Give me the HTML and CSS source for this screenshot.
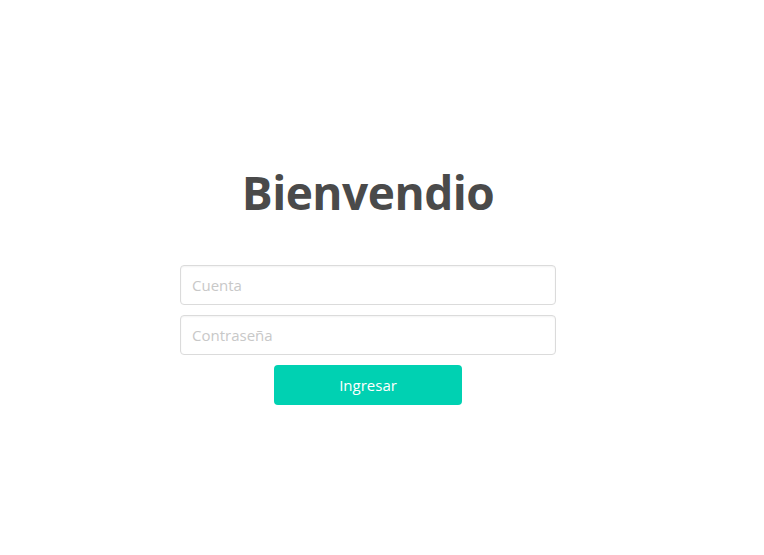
FILE: index.html
```html
<!DOCTYPE html>
<html lang="es">
<head>
<meta charset="utf-8">
<title>Bienvendio</title>
<link rel="stylesheet" href="styles.css">
</head>
<body>
<main class="page">
  <section class="login">
    <h1 class="title">Bienvendio</h1>
    <form class="form">
      <input class="input" type="text" placeholder="Cuenta">
      <input class="input" type="password" placeholder="Contraseña">
      <button class="button" type="button">Ingresar</button>
    </form>
  </section>
</main>
</body>
</html>
```

FILE: styles.css
```css
html, body {
  margin: 0;
  padding: 0;
  background: #ffffff;
}
body {
  font-family: "Open Sans", "Noto Sans", sans-serif;
  color: #4a4a4a;
}
.page {
  width: 736px;
  display: flex;
  justify-content: center;
  padding-top: 165px;
}
.login {
  width: 376px;
  display: flex;
  flex-direction: column;
  align-items: center;
}
.title {
  margin: 0;
  font-size: 46px;
  font-weight: 700;
  line-height: 1.2;
  color: #4a4a4a;
  letter-spacing: -0.5px;
}
.form {
  margin-top: 45px;
  width: 100%;
  display: flex;
  flex-direction: column;
  align-items: center;
  gap: 10px;
}
.input {
  box-sizing: border-box;
  width: 376px;
  height: 40px;
  border: 1px solid #dbdbdb;
  border-radius: 4px;
  padding: 0 11px;
  font-family: "Open Sans", "Noto Sans", sans-serif;
  font-size: 15px;
  color: #363636;
  background: #fff;
  box-shadow: inset 0 1px 2px rgba(10,10,10,0.05);
  outline: none;
}
.input::placeholder {
  color: #c8c8c8;
}
.button {
  width: 188px;
  height: 40px;
  border: none;
  border-radius: 4px;
  background: #00d1b2;
  color: #ffffff;
  font-family: "Open Sans", "Noto Sans", sans-serif;
  font-size: 15px;
  cursor: pointer;
}
```
